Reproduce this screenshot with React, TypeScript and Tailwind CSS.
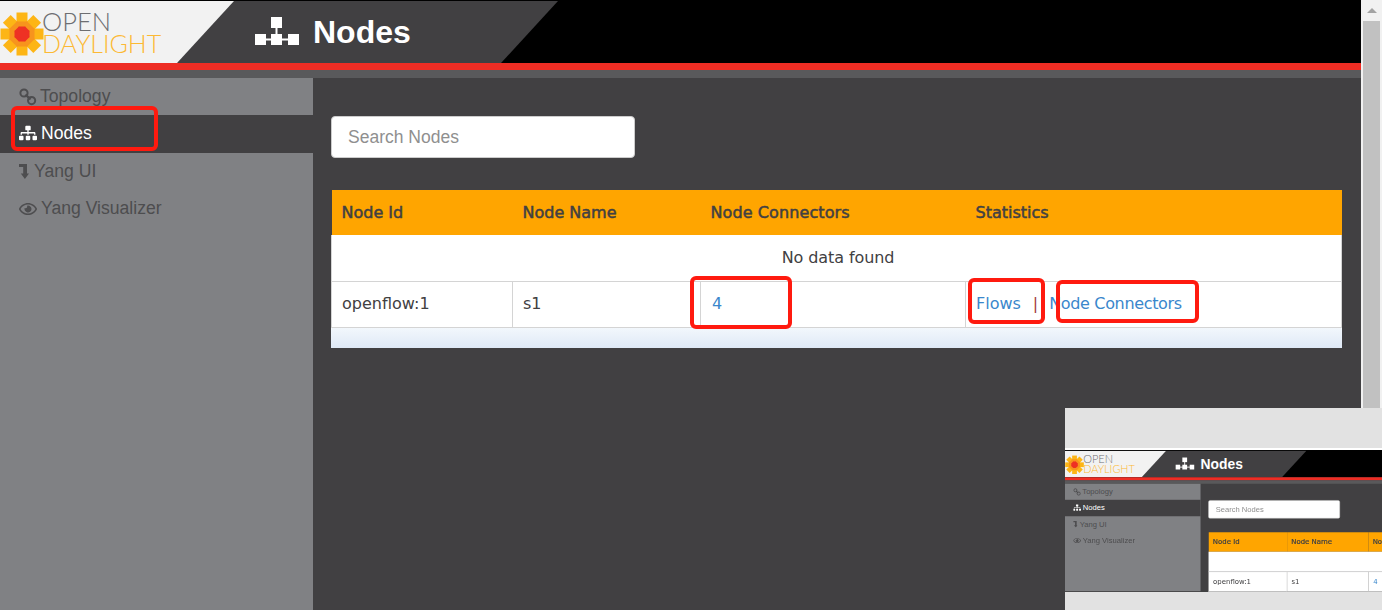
import React from "react";
import { FaSitemap, FaRegEye } from "react-icons/fa";

function Flower() {
  const arms = [0, 45, 90, 135];
  return (
    <svg width="44" height="44" viewBox="-22 -22 44 44" className="mt-[3px] shrink-0">
      {arms.map((a) => (
        <rect key={a} x="-5.5" y="-21.5" width="11" height="43" fill="#fdb515" transform={`rotate(${a})`} />
      ))}
      {arms.map((a) => (
        <rect key={a} x="-5.5" y="-12.5" width="11" height="25" fill="#f7941d" transform={`rotate(${a})`} />
      ))}
      {arms.map((a) => (
        <rect key={a} x="-3.2" y="-7.5" width="6.4" height="15" fill="#ee3124" transform={`rotate(${a})`} />
      ))}
    </svg>
  );
}

function TitleIcon() {
  return (
    <svg width="44" height="30" viewBox="0 0 44 30" fill="#ffffff" className="shrink-0">
      <rect x="16" y="0" width="11" height="11" />
      <rect x="0" y="17" width="11" height="11" />
      <rect x="16" y="17" width="11" height="11" />
      <rect x="33" y="17" width="11" height="11" />
      <rect x="20.5" y="10" width="2" height="8" />
      <rect x="10" y="21.5" width="24" height="2" />
    </svg>
  );
}

function ChainIcon() {
  return (
    <svg width="18" height="18" viewBox="0 0 18 18" fill="none" stroke="currentColor" strokeWidth="2" className="shrink-0">
      <circle cx="5" cy="5" r="3.6" />
      <circle cx="12.6" cy="12.6" r="3.6" />
      <path d="M6.5 6.5l5 5" strokeWidth="2.4" />
    </svg>
  );
}

function LevelDownIcon() {
  return (
    <svg width="10" height="15" viewBox="0 0 10 15" fill="currentColor" className="shrink-0">
      <path d="M0 0h8v9.5h2L5.9 15 1.8 9.5h2.4V3H0z" />
    </svg>
  );
}

const nav = [
  { label: "Topology", icon: <ChainIcon />, gap: "gap-[3px]", h: "h-[37px]" },
  { label: "Nodes", icon: <FaSitemap className="text-[18px]" />, active: true, gap: "gap-[4px]", h: "h-[38px] pb-[2px]" },
  { label: "Yang UI", icon: <LevelDownIcon />, gap: "gap-[5px]", h: "h-[37px]" },
  { label: "Yang Visualizer", icon: <FaRegEye className="text-[18px]" />, gap: "gap-[4px]", h: "h-[37px]" },
];

const cell = "border border-[#d4d4d4] px-[10px] text-[16px] font-normal text-left";
const headCell = "px-[10px] text-left text-[16px] font-normal [-webkit-text-stroke:0.5px_#414042]";

function Screen() {
  return (
    <div className="flex h-full w-full flex-col bg-[#414042]">
      <header className="flex h-[63px] shrink-0 bg-black pt-px">
        <div className="flex h-full w-[558px] items-stretch bg-[#414042] [clip-path:polygon(0_0,100%_0,calc(100%-57px)_100%,0_100%)]">
          <div className="flex h-full w-[234px] shrink-0 items-center bg-[#f2f2f2] [clip-path:polygon(0_0,100%_0,calc(100%-57px)_100%,0_100%)]">
            <Flower />
            <div className="-ml-[2px] flex flex-col font-['Lato',sans-serif] font-light">
              <span className="block text-[25.5px] leading-[21px] text-[#6d6e71]">OPEN</span>
              <span className="block text-[25px] leading-[22px] text-[#fcb934]">DAYLIGHT</span>
            </div>
          </div>
          <div className="flex items-center gap-[14px] pl-[21px]">
            <TitleIcon />
            <span className="font-['Liberation_Sans',sans-serif] text-[32px] font-bold leading-none text-white">Nodes</span>
          </div>
        </div>
      </header>
      <div className="h-[7px] shrink-0 bg-[#ee2d24]" />
      <div className="h-[8px] shrink-0 bg-[#59595b]" />
      <div className="flex min-h-0 flex-1">
        <aside className="w-[313px] shrink-0 bg-[#808184] font-['Liberation_Sans',sans-serif] text-[17.6px]">
          {nav.map((n) => (
            <div
              key={n.label}
              className={`flex items-center pl-[19px] ${n.h} ${n.gap} ${n.active ? "bg-[#414042] text-white" : "text-[#4d4d4f]"}`}
            >
              {n.icon}
              <span>{n.label}</span>
            </div>
          ))}
        </aside>
        <main className="flex-1 px-[18px] pt-[39px]">
          <input
            readOnly
            placeholder="Search Nodes"
            className="block h-[42px] w-[304px] -translate-y-px rounded-[4px] border border-[#cccccc] bg-white px-4 font-['Liberation_Sans',sans-serif] text-[17.5px] text-[#555555] placeholder:text-[#8f8f8f]"
          />
          <div className="mt-[31px] w-[1011px] font-['DejaVu_Sans',sans-serif] text-[#414042]">
            <table className="w-full table-fixed border-collapse">
              <colgroup>
                <col className="w-[181px]" />
                <col className="w-[188px]" />
                <col className="w-[265px]" />
                <col />
              </colgroup>
              <thead>
                <tr className="h-[45px] bg-[#ffa500]">
                  <th className={headCell}>Node Id</th>
                  <th className={headCell}>Node Name</th>
                  <th className={`${headCell} tracking-[0.1px]`}>Node Connectors</th>
                  <th className={headCell}>Statistics</th>
                </tr>
              </thead>
              <tbody className="bg-white">
                <tr className="h-[46px]">
                  <td colSpan={4} className="border border-t-0 border-[#d4d4d4] pl-[3px] text-center text-[16px] tracking-[-0.1px]">No data found</td>
                </tr>
                <tr className="h-[46px]">
                  <td className={cell}>openflow:1</td>
                  <td className={cell}>s1</td>
                  <td className={`${cell} pl-[11px]`}><a className="text-[#3a87cc]">4</a></td>
                  <td className={cell}>
                    <a className="text-[#3a87cc]">Flows</a>
                    <span className="ml-[12px] mr-[11px] text-[#a33a3a]">|</span>
                    <a className="tracking-[-0.35px] text-[#3a87cc]">Node Connectors</a>
                  </td>
                </tr>
              </tbody>
            </table>
            <div className="h-[20px] bg-gradient-to-b from-[#f2f7fc] to-[#dfe9f6]" />
          </div>
        </main>
      </div>
    </div>
  );
}

const mark = "pointer-events-none absolute rounded-[6px] border-[4px] border-[#ff1a0f]";

export default function App() {
  return (
    <div className="relative flex h-[610px] w-[1382px] overflow-hidden bg-white">
      <div className="w-[1361px] shrink-0">
        <Screen />
      </div>
      <div className="flex h-full flex-1 flex-col bg-[#f1f1f1] pl-[2px] pr-[2px]">
        <div className="flex h-[21px] shrink-0 items-center justify-center">
          <div className="h-0 w-0 border-x-[5px] border-b-[5px] border-x-transparent border-b-[#a3a3a3]" />
        </div>
        <div className="h-[400px] bg-[#c1c1c1]" />
      </div>

      <div className={`${mark} left-[11px] top-[106px] h-[45px] w-[147px]`} />
      <div className={`${mark} left-[690px] top-[276px] h-[53px] w-[102px]`} />
      <div className={`${mark} left-[968px] top-[278px] h-[46px] w-[77px]`} />
      <div className={`${mark} left-[1056px] top-[280px] h-[43px] w-[143px]`} />

      <div className="absolute left-[1065px] top-[408px] h-[202px] w-[317px] bg-[#e2e2e2] pt-[40px]">
        <div className="h-[144px] w-[317px] overflow-hidden bg-white pt-[2px]">
          <div className="h-[326px] w-[1361px] origin-top-left scale-[0.433]">
            <Screen />
          </div>
        </div>
      </div>
    </div>
  );
}
